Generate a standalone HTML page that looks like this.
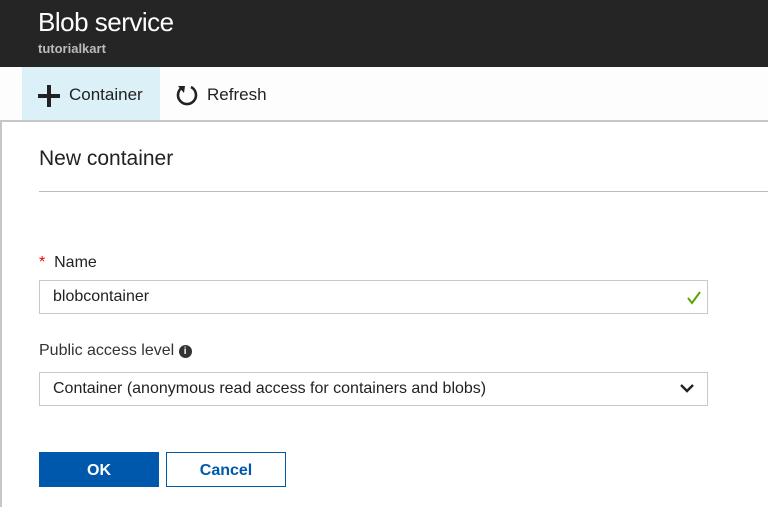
<!DOCTYPE html>
<html><head><style>
*{margin:0;padding:0;box-sizing:border-box}
body{width:768px;height:507px;overflow:hidden;background:#fff;font-family:"Segoe UI","Liberation Sans",sans-serif;color:#222;position:relative}
.hdr{position:absolute;left:0;top:0;width:768px;height:67px;background:#252525}
.t1{position:absolute;left:38px;top:7px;font-size:26px;color:#fff;letter-spacing:-0.5px}
.t2{position:absolute;left:38px;top:41px;font-size:13px;font-weight:bold;color:#bbb}
.tb{position:absolute;left:0;top:67px;width:768px;height:54px;background:#fdfdfd}
.cbtn{position:absolute;left:22px;top:0;width:138px;height:54px;background:#dcf0f8}
.tbt{position:absolute;top:18px;font-size:17px;color:#222}
.panel{position:absolute;left:0;top:120px;width:768px;height:387px;background:#fff;border-top:2px solid #c6c6c6;border-left:2px solid #c6c6c6}
.abs{position:absolute}
.inp{position:absolute;left:39px;width:669px;height:34px;border:1px solid #c8c8c8;font-size:16px;padding:7px 0 0 13px}
.btn{position:absolute;top:452px;height:35px;font-size:16px;font-weight:bold;text-align:center;line-height:35px}
</style></head><body>
<div class="hdr"><div class="t1">Blob service</div><div class="t2">tutorialkart</div></div>
<div class="tb"><div class="cbtn"></div>
<svg class="abs" style="left:37px;top:17px" width="24" height="24"><rect x="10" y="1" width="4" height="22" fill="#222"/><rect x="1" y="10" width="22" height="4" fill="#222"/></svg>
<div class="tbt" style="left:69px">Container</div>
<svg class="abs" style="left:175px;top:15px" width="24" height="24"><path d="M8 5 A9 9 0 1 0 16 5" fill="none" stroke="#222" stroke-width="2.6"/><path d="M3 4 L10 4 L9 11 Z" fill="#222"/></svg>
<div class="tbt" style="left:207px">Refresh</div>
</div>
<div class="panel"></div>
<div class="abs" style="left:39px;top:147px;font-size:21px;color:#222">New container</div>
<div class="abs" style="left:39px;top:191px;width:729px;height:1px;background:#bbb"></div>
<div class="abs" style="left:39px;top:254px;font-size:16px"><span style="color:#e00">*</span>&nbsp; Name</div>
<div class="inp" style="top:280px">blobcontainer</div>
<svg class="abs" style="left:686px;top:290px" width="16" height="16"><path d="M2 8 L6 13 L14 2" fill="none" stroke="#5ca400" stroke-width="2"/></svg>
<div class="abs" style="left:39px;top:342px;font-size:16px;color:#333">Public access level <span style="display:inline-block;width:13px;height:13px;border-radius:50%;background:#333;color:#fff;font-size:10px;font-weight:bold;text-align:center;line-height:13px;vertical-align:1px">i</span></div>
<div class="inp" style="top:372px">Container (anonymous read access for containers and blobs)</div>
<svg class="abs" style="left:680px;top:382px" width="14" height="12"><path d="M1 3 L7 9 L13 3" fill="none" stroke="#222" stroke-width="2.4"/></svg>
<div class="btn" style="left:39px;width:120px;background:#0058ad;color:#fff;border:1px solid #0058ad">OK</div>
<div class="btn" style="left:166px;width:120px;border:1px solid #0058ad;color:#0058ad;background:#fff">Cancel</div>
</body></html>
